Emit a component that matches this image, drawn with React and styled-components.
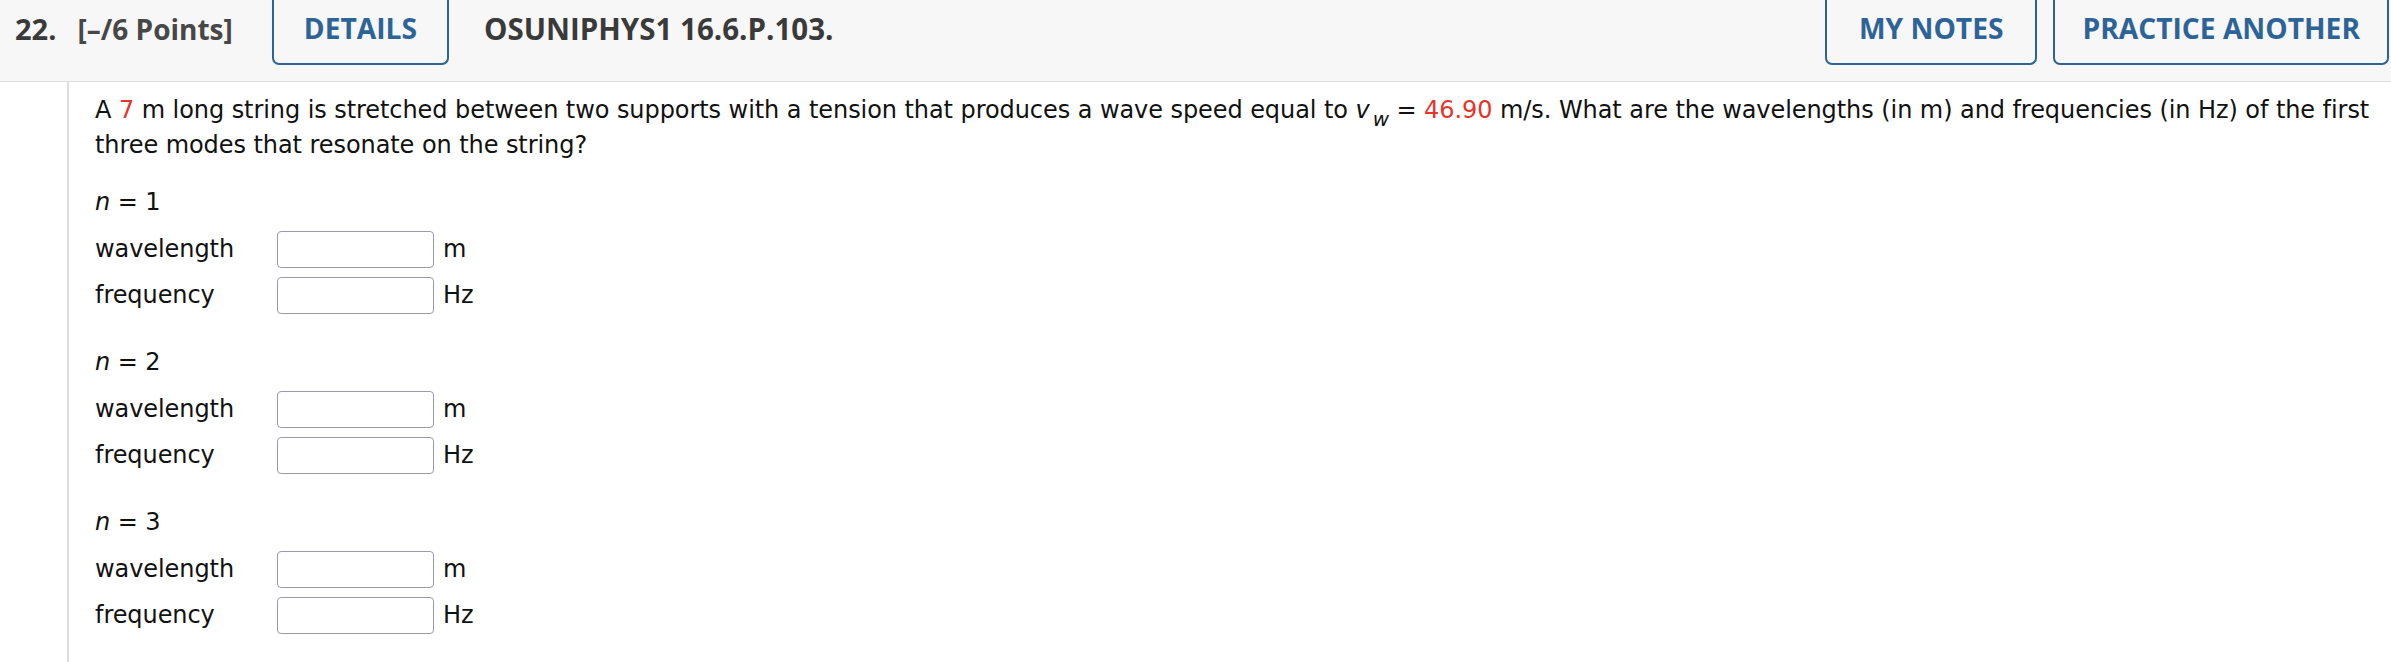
import React from "react"
import styled, { createGlobalStyle } from "styled-components"

const GlobalStyle = createGlobalStyle`
  html, body {
    margin: 0;
    padding: 0;
    background: #ffffff;
  }
  body {
    overflow: hidden;
  }
`

const Page = styled.div`
  width: 2391px;
  height: 662px;
  display: flex;
  flex-direction: column;
  background: #ffffff;
`

// header strip with question number, points and the action tabs
const Header = styled.div`
  display: flex;
  align-items: flex-start;
  height: 81px;
  background: #f7f7f7;
  border-bottom: 1px solid #dedede;
  padding-left: 15px;
  font-family: "Open Sans", "Liberation Sans", sans-serif;
`

const HeaderText = styled.div`
  height: 65px;
  display: flex;
  align-items: center;
  padding-bottom: 8px;
  box-sizing: border-box;
  font-size: ${p => p.$size || 29.5}px;
  font-weight: 700;
  color: ${p => p.$muted ? "#474747" : "#3a3a3a"};
  margin-right: ${p => p.$gap || 0}px;
  white-space: nowrap;
`

const Spacer = styled.div`
  flex: 1;
`

const TabButton = styled.div`
  height: 65px;
  display: flex;
  align-items: center;
  box-sizing: border-box;
  padding: 0 ${p => p.$pad || 30}px 8px;
  border: 2px solid #2d6498;
  border-top: none;
  border-radius: 0 0 7px 7px;
  font-size: 28.2px;
  font-weight: 700;
  color: #2d6498;
  margin-right: ${p => p.$gap || 0}px;
  white-space: nowrap;
`

const Body = styled.div`
  flex: 1;
  display: flex;
`

const Gutter = styled.div`
  width: 67px;
  flex-shrink: 0;
  border-right: 2px solid #dddddd;
`

const Content = styled.div`
  flex: 1;
  min-width: 0;
  padding: 11px 0 0 26px;
  font-family: "DejaVu Sans", Verdana, sans-serif;
  font-size: 24px;
  letter-spacing: -0.07px;
  line-height: 35px;
  color: #111111;
`

const Question = styled.p`
  margin: 0;
`

const Red = styled.span`
  color: #e5352b;
`

const Var = styled.i`
  font-style: italic;
`

const Sub = styled.sub`
  font-size: 20px;
  font-style: italic;
  vertical-align: -8px;
  line-height: 0;
  margin-left: 3px;
`

const Mode = styled.div`
  margin-top: ${p => (p.$first ? 22 : 31)}px;
`

const ModeLabel = styled.div`
  height: 35px;
  margin-bottom: 11px;
`

const Row = styled.div`
  display: flex;
  align-items: center;
  height: 37px;
  margin-bottom: ${p => (p.$last ? 0 : 9)}px;
`

const Label = styled.div`
  width: 182px;
`

const Field = styled.div`
  width: 157px;
  height: 37px;
  box-sizing: border-box;
  border: 1px solid #9b9ba8;
  border-radius: 4px;
  background: #ffffff;
  margin-right: 9px;
`

const modes = [1, 2, 3]

const App = () => {
  return (
    <Page>
      <GlobalStyle />
      <Header>
        <HeaderText $size={29} $gap={21}>22.</HeaderText>
        <HeaderText $size={28} $muted $gap={39}>[–/6 Points]</HeaderText>
        <TabButton $gap={35}>DETAILS</TabButton>
        <HeaderText>OSUNIPHYS1 16.6.P.103.</HeaderText>
        <Spacer />
        <TabButton $pad={32} $gap={16}>MY NOTES</TabButton>
        <TabButton $pad={27} $gap={2}>PRACTICE ANOTHER</TabButton>
      </Header>
      <Body>
        <Gutter />
        <Content>
          <Question>
            A <Red>7</Red> m long string is stretched between two supports with a
            tension that produces a wave speed equal to <Var>v</Var>
            <Sub>w</Sub> = <Red>46.90</Red> m/s. What are the wavelengths (in m)
            and frequencies (in Hz) of the first three modes that resonate on the
            string?
          </Question>
          {modes.map((n, i) => (
            <Mode key={n} $first={i === 0}>
              <ModeLabel>
                <Var>n</Var> = {n}
              </ModeLabel>
              <Row>
                <Label>wavelength</Label>
                <Field />
                m
              </Row>
              <Row $last>
                <Label>frequency</Label>
                <Field />
                Hz
              </Row>
            </Mode>
          ))}
        </Content>
      </Body>
    </Page>
  )
}

export default App
